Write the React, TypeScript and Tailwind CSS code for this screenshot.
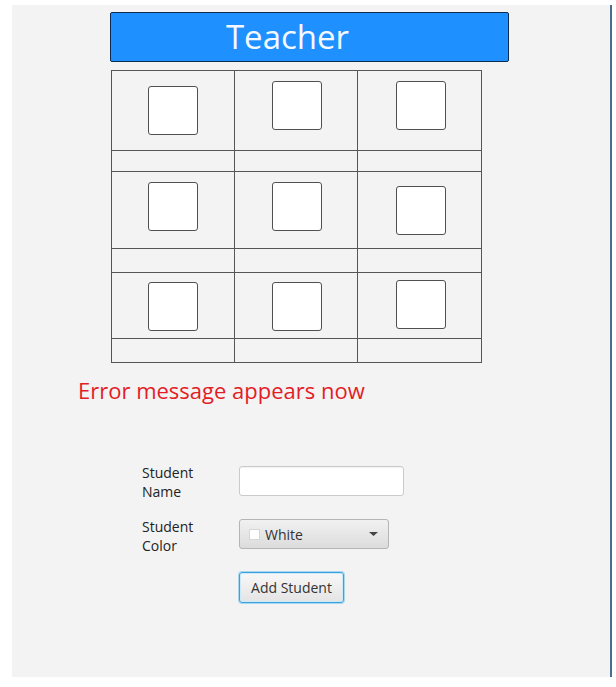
import { Fragment, type ReactNode } from "react"

const font = { fontFamily: '"Open Sans", "Noto Sans", sans-serif' }

// top offset of each square inside its tall cell, one row of three per group
const squareTops = [
  [15, 10, 10],
  [10, 10, 14],
  [9, 9, 7],
]
const squareLefts = [36, 37, 38]
const tallRowHeights = ["h-[79px]", "h-[76px]", "h-[65px]"]
const shortRowHeights = ["h-[20px]", "h-[23px]", "h-[23px]"]

function Square({ top, left }: { top: number; left: number }) {
  return (
    <div
      className="w-[50px] h-[49px] bg-white border-[1.5px] border-[#505050] rounded-[3px]"
      style={{ marginTop: top, marginLeft: left }}
    />
  )
}

function SeatGrid() {
  return (
    <div className="ml-[99px] mt-[8px] w-fit grid grid-cols-[122px_122px_123px] gap-px p-px bg-[#555]">
      {squareTops.map((row, r) => (
        <Fragment key={r}>
          {row.map((top, c) => (
            <div key={`t${c}`} className={`${tallRowHeights[r]} bg-[#f3f3f3]`}>
              <Square top={top} left={squareLefts[c]} />
            </div>
          ))}
          {row.map((_, c) => (
            <div key={`s${c}`} className={`${shortRowHeights[r]} bg-[#f3f3f3]`} />
          ))}
        </Fragment>
      ))}
    </div>
  )
}

function Label({ children }: { children: ReactNode }) {
  return <div className="text-[14px] leading-[19px] text-[#222]">{children}</div>
}

export default function App() {
  return (
    <div className="w-[616px] h-[687px] bg-white pt-[5px] pl-[12px]" style={font}>
      <div className="w-[600px] h-[672px] pt-[7px] bg-[#f3f3f3] border-r-2 border-[#4a6d8c]">
        <div className="ml-[98px] w-[399px] h-[50px] bg-[#1e90ff] border border-[#0d2c52] rounded-[2px] flex items-center justify-center pr-[44px]">
          <span className="text-[33px] leading-none text-[#f4f8ff] pb-[2px]">Teacher</span>
        </div>

        <SeatGrid />

        <div className="ml-[66px] mt-[12px] text-[22px] leading-[30px] text-[#e31c25]">
          Error message appears now
        </div>

        <div className="ml-[130px] mt-[58px] grid grid-cols-[97px_auto] gap-y-[16px] items-start">
          <Label>
            Student
            <br />
            Name
          </Label>
          <div className="mt-[3px] w-[165px] h-[30px] bg-white border border-[#cacaca] rounded-[3px] shadow-[inset_0_1px_1px_rgba(0,0,0,0.05)]" />

          <Label>
            Student
            <br />
            Color
          </Label>
          <div className="mt-[2px] w-[150px] h-[30px] rounded-[3px] border border-[#b5b5b5] bg-gradient-to-b from-[#f1f1f1] to-[#dcdcdc] flex items-center pl-[9px] pr-[10px]">
            <div className="w-[11px] h-[11px] bg-white border border-[#d6d6d6]" />
            <span className="ml-[5px] text-[14px] text-[#333]">White</span>
            <svg className="ml-auto" width="9" height="4" viewBox="0 0 9 4">
              <path d="M0 0 L9 0 L4.5 4 Z" fill="#444" />
            </svg>
          </div>

          <div />
          <button className="mt-[1px] w-[105px] h-[31px] rounded-[3px] border border-[#3ba3dc] shadow-[inset_0_0_0_1px_#cde8f7,0_0_0_1px_#a9d6ef] bg-gradient-to-b from-[#f8f8f8] to-[#e4e4e4] text-[14px] text-[#333]">
            Add Student
          </button>
        </div>
      </div>
    </div>
  )
}
